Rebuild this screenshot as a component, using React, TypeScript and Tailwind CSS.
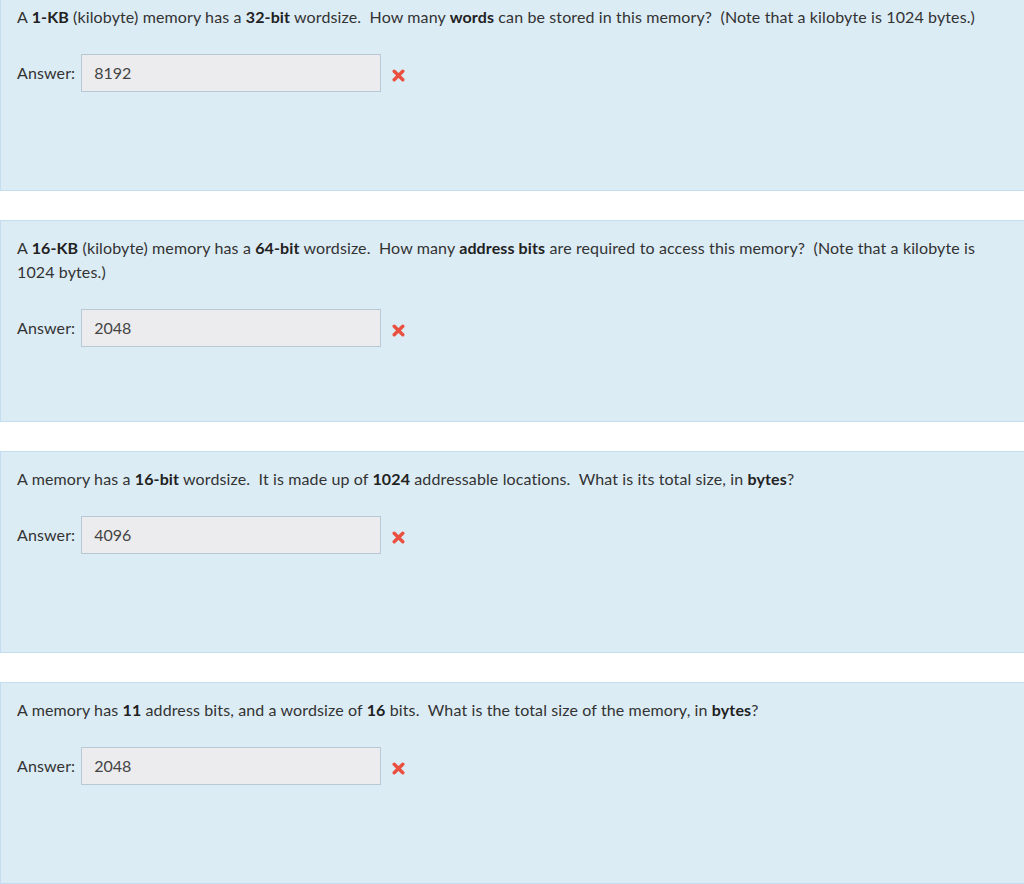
import React from "react";

type Part = string | { b: string };

type Question = {
  id: number;
  text: Part[];
  answer: string;
};

const QUESTIONS: Question[] = [
  {
    id: 1,
    text: [
      "A ",
      { b: "1-KB" },
      " (kilobyte) memory has a ",
      { b: "32-bit" },
      " wordsize.  How many ",
      { b: "words" },
      " can be stored in this memory?  (Note that a kilobyte is 1024 bytes.)",
    ],
    answer: "8192",
  },
  {
    id: 2,
    text: [
      "A ",
      { b: "16-KB" },
      " (kilobyte) memory has a ",
      { b: "64-bit" },
      " wordsize.  How many ",
      { b: "address bits" },
      " are required to access this memory?  (Note that a kilobyte is 1024 bytes.)",
    ],
    answer: "2048",
  },
  {
    id: 3,
    text: [
      "A memory has a ",
      { b: "16-bit" },
      " wordsize.  It is made up of ",
      { b: "1024" },
      " addressable locations.  What is its total size, in ",
      { b: "bytes" },
      "?",
    ],
    answer: "4096",
  },
  {
    id: 4,
    text: [
      "A memory has ",
      { b: "11" },
      " address bits, and a wordsize of ",
      { b: "16" },
      " bits.  What is the total size of the memory, in ",
      { b: "bytes" },
      "?",
    ],
    answer: "2048",
  },
];

function WrongMark() {
  return (
    <svg width="13" height="13" viewBox="0 0 13 13" className="ml-[11px] mt-[5px] shrink-0">
      <path d="M2.2 2.2 L10.8 10.8 M10.8 2.2 L2.2 10.8" stroke="#e9503f" strokeWidth="3.4" strokeLinecap="round" />
    </svg>
  );
}

function QuestionPanel({ q, first }: { q: Question; first?: boolean }) {
  return (
    <div
      className={
        "min-h-[202px] border-y border-l border-[#c3def0] bg-[#dcecf5] pl-[16px] pr-[24px] pt-[15px] " +
        (first ? "-mt-[11px]" : "mt-[29px]")
      }
    >
      <p className="whitespace-pre-wrap text-[16px] leading-[24px] tracking-[0.12px] text-[#333333]">
        {q.text.map((part, i) =>
          typeof part === "string" ? (
            <span key={i}>{part}</span>
          ) : (
            <span key={i} className="font-bold text-[#222222]">
              {part.b}
            </span>
          ),
        )}
      </p>
      <div className="mt-[25px] flex items-center">
        <span className="text-[16px] tracking-[0.12px] text-[#333333]">Answer:</span>
        <div className="ml-[6px] flex h-[38px] w-[300px] items-center border border-[#b8c9d5] bg-[#ececee] px-[12px] text-[16px] text-[#444444]">
          {q.answer}
        </div>
        <WrongMark />
      </div>
    </div>
  );
}

export default function App() {
  return (
    <div
      className="h-[884px] w-[1024px] overflow-hidden bg-white"
      style={{ fontFamily: "Lato, 'Open Sans', 'Liberation Sans', sans-serif" }}
    >
      {QUESTIONS.map((q, i) => (
        <QuestionPanel key={q.id} q={q} first={i === 0} />
      ))}
    </div>
  );
}
